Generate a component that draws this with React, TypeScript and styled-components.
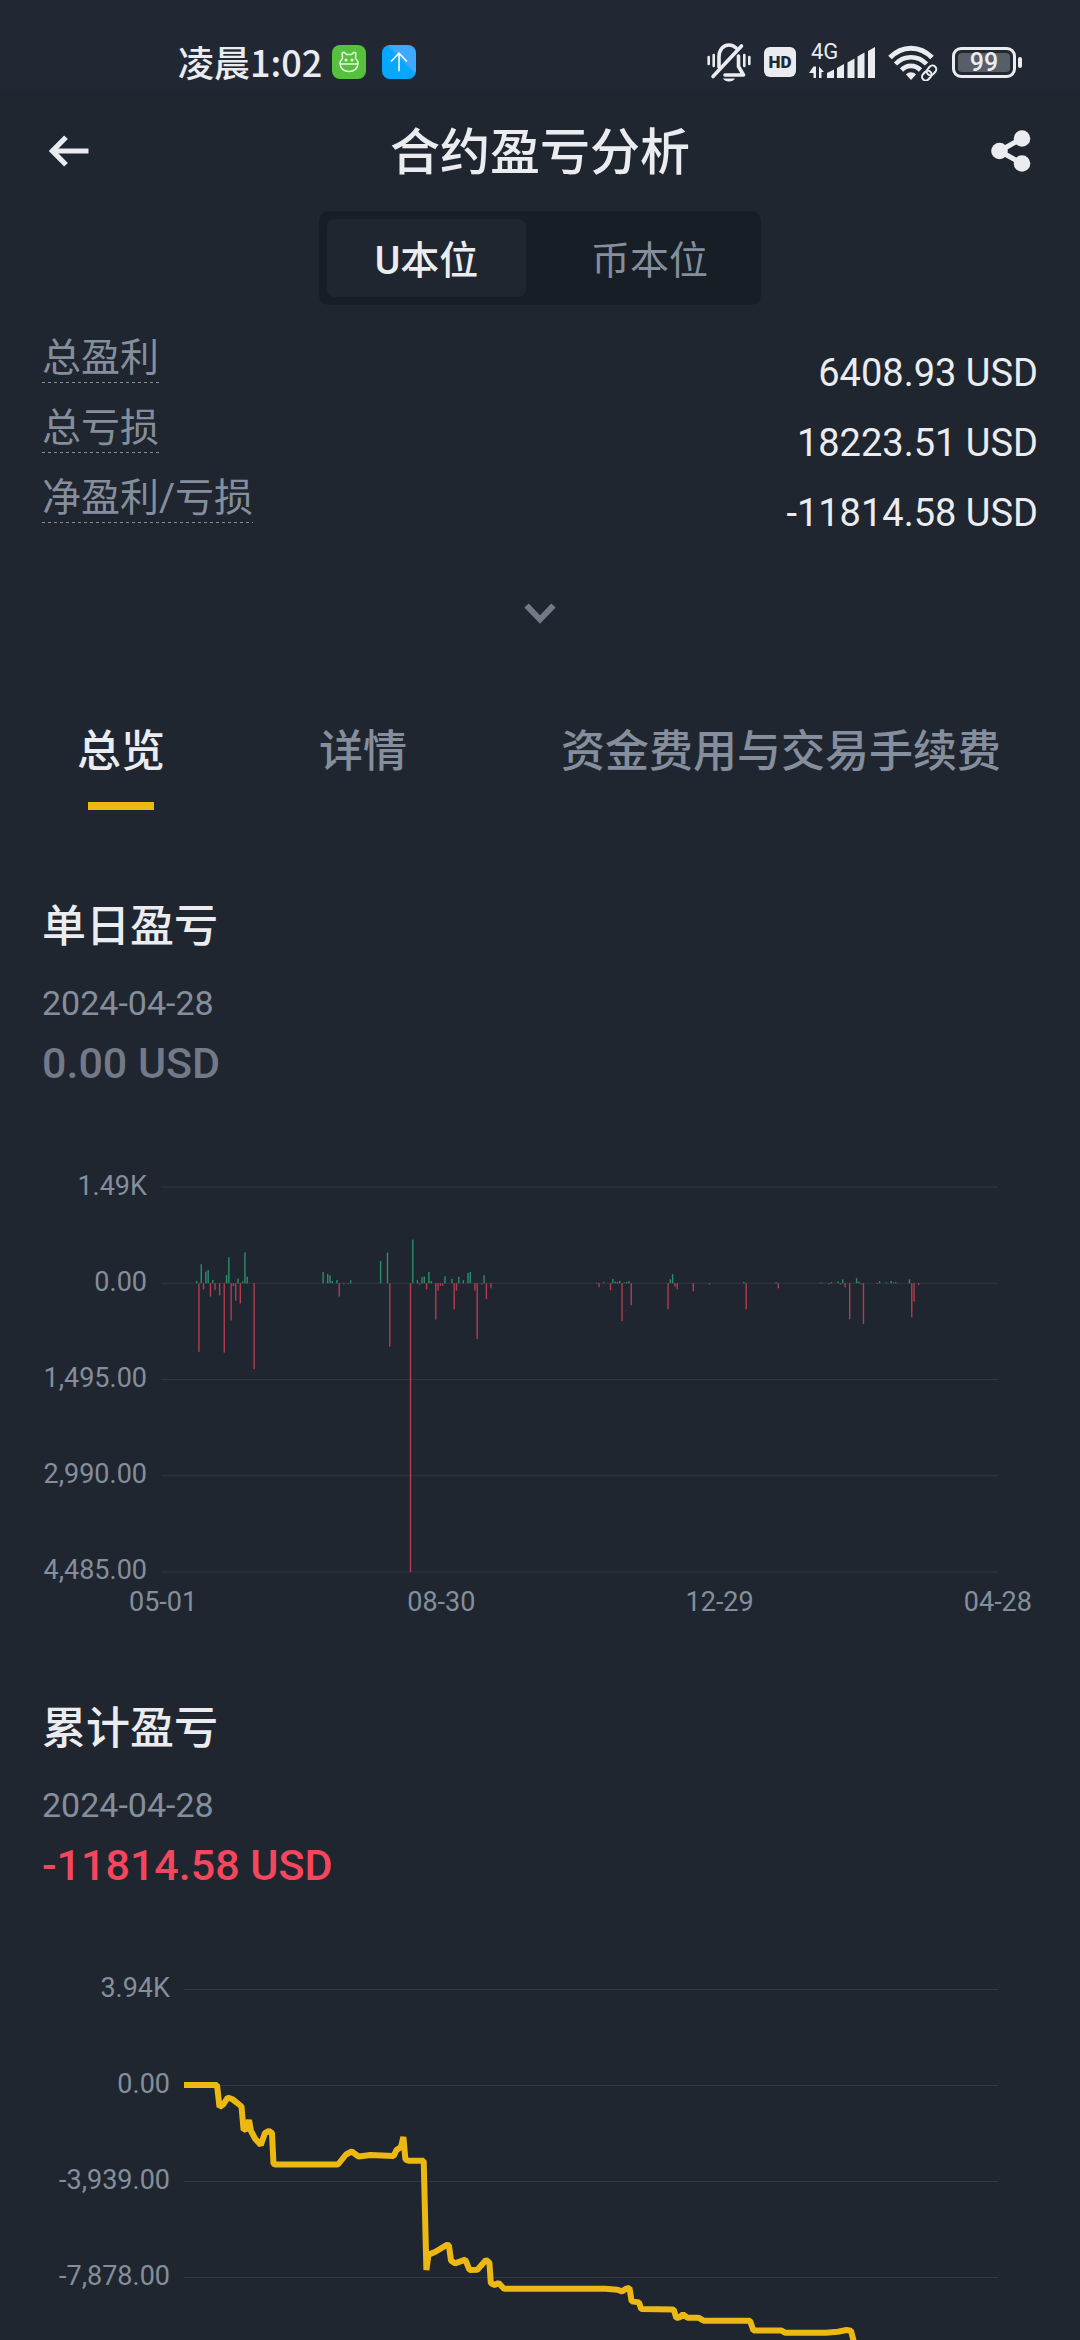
import React, { useState } from "react";
import styled, { createGlobalStyle } from "styled-components";

const color = {
  page: "#20262f",
  bar: "#212833",
  well: "#181e26",
  text: "#eaecef",
  muted: "#848e9c",
  faint: "#737987",
  line: "#313844",
  accent: "#ecb814",
  red: "#f6465d",
  green: "#2ebd85",
};

const GlobalStyle = createGlobalStyle`
  *, *::before, *::after { box-sizing: border-box; }
  body {
    margin: 0;
    background: ${color.page};
    color: ${color.text};
    font-family: Roboto, "Noto Sans CJK SC", sans-serif;
  }
  button {
    margin: 0;
    padding: 0;
    border: 0;
    background: none;
    color: inherit;
    font: inherit;
    cursor: pointer;
  }
`;

const Screen = styled.div`
  display: flex;
  flex-direction: column;
  height: 100vh;
  overflow: hidden;
`;

/* ---------- status bar ---------- */

const StatusBar = styled.div`
  display: flex;
  flex: none;
  align-items: center;
  justify-content: space-between;
  height: 89px;
  padding: 35px 58px 0 178px;
  background: ${color.bar};
`;

const StatusGroup = styled.div<{ $gap: number }>`
  display: flex;
  align-items: center;
  gap: ${(p) => p.$gap}px;
`;

const Clock = styled.span`
  margin-right: -6px;
  padding-bottom: 2px;
  font-family: "Noto Sans CJK SC", sans-serif;
  font-size: 36px;
  font-weight: 500;
  line-height: 40px;
`;

const AppBadge = styled.span<{ $fill: string }>`
  display: grid;
  place-items: center;
  width: 34px;
  height: 34px;
  border-radius: 8px;
  background: ${(p) => p.$fill};
`;

const HdBadge = styled.span`
  width: 32px;
  height: 30px;
  border-radius: 6px;
  background: ${color.text};
  color: ${color.bar};
  font-size: 17px;
  font-weight: 900;
  line-height: 30px;
  text-align: center;
`;

const Signal = styled.span`
  position: relative;
  display: block;
  width: 66px;
  height: 34px;
`;

const NetworkType = styled.span`
  position: absolute;
  top: -4px;
  left: 2px;
  font-size: 22px;
  line-height: 22px;
`;

const Battery = styled.span`
  display: flex;
  align-items: center;
  gap: 2px;
  &::after {
    content: "";
    width: 4px;
    height: 11px;
    border-radius: 2px;
    background: ${color.text};
  }
`;

const BatteryBody = styled.span`
  width: 64px;
  height: 31px;
  padding: 3px;
  border: 3px solid ${color.text};
  border-radius: 9px;
`;

const BatteryLevel = styled.span`
  display: block;
  height: 19px;
  border-radius: 4px;
  background: #585e68;
  font-size: 25px;
  font-weight: 500;
  line-height: 20px;
  text-align: center;
`;

/* ---------- header ---------- */

const Header = styled.header`
  display: grid;
  flex: none;
  grid-template-columns: 1fr auto 1fr;
  align-items: center;
  height: 122px;
  padding: 2px 49px 0;
`;

const Title = styled.h1`
  margin: 0;
  padding-top: 4px;
  font-size: 50px;
  font-weight: 500;
  line-height: 60px;
`;

const IconButton = styled.button<{ $end?: boolean }>`
  display: flex;
  justify-self: ${(p) => (p.$end ? "end" : "start")};
`;

const Segment = styled.div`
  display: flex;
  flex: none;
  align-self: center;
  gap: 24px;
  padding: 8px 12px 8px 8px;
  border-radius: 10px;
  background: ${color.well};
`;

const SegmentButton = styled.button<{ $active: boolean }>`
  width: 199px;
  height: 78px;
  padding-top: 6px;
  border-radius: 8px;
  background: ${(p) => (p.$active ? color.page : "transparent")};
  color: ${(p) => (p.$active ? color.text : color.muted)};
  font-size: 39px;
  font-weight: ${(p) => (p.$active ? 500 : 400)};
  line-height: 48px;
`;

/* ---------- summary ---------- */

const Content = styled.main`
  display: flex;
  flex: 1;
  flex-direction: column;
  min-height: 0;
  overflow: hidden;
`;

const Summary = styled.dl`
  display: flex;
  flex-direction: column;
  gap: 10px;
  margin: 30px 0 0;
  padding: 0 42px;
`;

const SummaryRow = styled.div`
  display: flex;
  justify-content: space-between;
  height: 60px;
`;

const SummaryLabel = styled.dt`
  align-self: flex-start;
  padding-bottom: 2px;
  background: repeating-linear-gradient(90deg, ${color.muted} 0 3px, transparent 3px 6px) left bottom / 100% 1px no-repeat;
  color: ${color.muted};
  font-size: 39px;
  line-height: 46px;
`;

const SummaryValue = styled.dd`
  align-self: flex-end;
  margin: 0;
  font-size: 38px;
  line-height: 44px;
`;

const ExpandButton = styled.button`
  display: flex;
  align-self: center;
  margin-top: 68px;
`;

/* ---------- tabs ---------- */

const Tabs = styled.nav`
  display: flex;
  flex: none;
  margin: 97px 0 6px;
`;

const Tab = styled.button<{ $active: boolean }>`
  display: flex;
  flex-direction: column;
  align-items: center;
  gap: 20px;
  padding: 0 77px;
  color: ${(p) => (p.$active ? color.text : color.muted)};
  font-size: 44px;
  font-weight: 500;
  line-height: 60px;
  white-space: nowrap;
  &::after {
    content: "";
    width: 66px;
    height: 8px;
    background: ${(p) => (p.$active ? color.accent : "transparent")};
  }
`;

/* ---------- chart sections ---------- */

const Section = styled.section`
  flex: none;
  padding: 81px 42px 0;
`;

const SectionTitle = styled.h2`
  margin: 0;
  font-size: 44px;
  font-weight: 500;
  line-height: 60px;
`;

const SectionDate = styled.time`
  display: block;
  margin-top: 22px;
  color: ${color.muted};
  font-size: 34px;
  line-height: 48px;
`;

const SectionValue = styled.p<{ $tone: string }>`
  margin: 6px 0 0;
  color: ${(p) => p.$tone};
  font-size: 43px;
  font-weight: 500;
  line-height: 60px;
`;

const ChartFrame = styled.figure<{ $axis: number }>`
  display: grid;
  grid-template-columns: ${(p) => p.$axis}px 1fr;
  column-gap: 14px;
  margin: 77px 40px 0 0;
`;

const YAxis = styled.div`
  display: flex;
  flex-direction: column;
  align-items: flex-end;
  gap: 64px;
`;

const Tick = styled.span`
  color: ${color.muted};
  font-size: 27px;
  line-height: 32px;
`;

const Plot = styled.svg`
  display: block;
  width: 100%;
  height: 385px;
  margin-top: 17px;
  overflow: visible;
`;

const XAxis = styled.div`
  display: flex;
  grid-column: 2;
  justify-content: space-between;
  margin: 0 -34px 0 -32px;
`;

/* Daily result: [day index, height], one grid row is 289 units. */
const ROW = 289;
const DAYS = 364;
const daily: [number, number][] = [
  [15, 7], [16, -206], [17, 57], [18, -18], [19, 35], [20, 40], [21, -40], [22, 10], [23, -20], [25, -36],
  [27, -208], [28, 25], [29, 78], [30, -112], [31, -8], [32, -52], [33, 14], [34, -61], [35, 6], [36, 93],
  [37, 20], [40, -258], [70, 34], [72, 28], [73, 24], [74, 7], [76, 10], [77, -40], [79, -3], [81, -2],
  [82, 9], [95, 67], [98, 92], [99, -190], [108, -867], [109, 131], [111, 9], [112, -4], [113, 18], [114, 20],
  [115, -18], [116, 34], [117, 7], [119, -109], [120, -22], [121, -8], [122, -7], [123, 21], [126, 13],
  [127, -78], [128, -22], [129, 19], [131, 9], [133, 31], [134, 34], [136, -22], [137, -167], [139, -4],
  [140, 24], [141, -47], [143, -15], [189, 2], [190, -12], [192, 3], [195, -21], [196, 13], [197, 5], [198, 4],
  [199, 7], [200, -114], [201, 2], [202, 4], [203, 6], [204, -66], [220, -78], [221, 12], [222, 27], [223, -10],
  [224, -18], [231, -24], [238, -4], [253, 4], [254, -78], [267, 3], [268, -15], [286, 2], [287, 2], [290, -3],
  [291, 3], [294, 5], [295, -4], [296, 12], [297, -12], [299, -108], [302, 15], [303, 5], [304, -3], [305, -122],
  [311, -2], [312, 6], [315, 2], [317, 7], [318, 2], [319, 3], [325, 12], [326, -102], [327, -55], [329, -5],
];

const cumulative =
  "0,96 33,96 35.5,118 39.6,115 43.7,108.6 48,110 52,113 57.5,117.5 59.6,141 62.7,140 65,131 67,142 71.3,150 76.8,156 81,144 85,142 88,144 89.5,174.6 91,175.5 154,175.5 162,165.5 167.7,162.5 174.6,167.5 186.6,166 209.7,167 212.5,161 217,158 219.4,148 221.4,170.5 224.5,171.7 239.7,171.7 242.4,281 244.5,265.6 251,263 263.4,255.5 265,257 267,271.5 271,274.4 281.3,270.6 285.5,281 293.4,280.7 302,271 305.4,273.6 306.8,294 310.6,296 314.7,294 320,299.7 421.4,299.7 433.5,300.7 438,302.4 442,299.7 445.5,299 447.6,312.4 455,313.4 457.2,320 489.6,320.4 492.4,329 495.5,328.4 499,325.4 503.4,328.7 514.4,328.7 519.6,331.7 566,331.7 569.5,341.4 597,341.4 601,343.7 641.8,343.7 653.9,342.7 662.5,341 667,341.7 669.4,351 676,380 814,384";

const GridLines = ({ width, height }: { width: number; height: number }) => (
  <g stroke={color.line} strokeWidth="1" shapeRendering="crispEdges">
    {[0, 1, 2, 3, 4].map((i) => (
      <line key={i} x1="0" x2={width} y1={(height * i) / 4} y2={(height * i) / 4} vectorEffect="non-scaling-stroke" />
    ))}
  </g>
);

const CatIcon = () => (
  <svg width="20" height="22" viewBox="0 0 20 22" fill="none" stroke="#e9f6e3" strokeWidth="1.5" strokeLinejoin="round">
    <path d="M3.5 7.5 3.2 2l2-.8L7.5 3.600h5L14.800 1.200l2 .8-.3 5.500C18.300 9 19 10.500 19 12.500c0 5-4 8-9 8s-9-3-9-8c0-2 .7-3.500 2.500-5Z" />
    <path d="M1.500 13h17" />
    <circle cx="7" cy="9" r="0.800" fill="#e9f6e3" />
    <circle cx="13" cy="9" r="0.800" fill="#e9f6e3" />
  </svg>
);

const UpArrowIcon = () => (
  <svg width="18" height="20" viewBox="0 0 18 20" fill="none" stroke="#f4fbff" strokeWidth="1.600" strokeLinecap="round">
    <path d="M9 1.200v17.600M1.500 9 9 1.200 16.500 9" />
  </svg>
);

const MutedBellIcon = () => (
  <svg width="44" height="39" viewBox="0 0 44 39" fill="none" stroke={color.text} strokeLinecap="round">
    <path d="M12 24V14C12 7 16 2 22 2c3 0 5.500 1.200 7.200 3.200" strokeWidth="3.600" />
    <path d="M34.500 3 6 33.500" strokeWidth="3.600" />
    <path d="M31.500 13v10.500l5 8.500H18" strokeWidth="3.600" strokeLinejoin="round" />
    <path d="M1.700 14v7M42.300 14v7" strokeWidth="2.600" />
    <path d="M6.700 12v11M37.300 12v11" strokeWidth="2.600" />
    <path d="M16 35.500h12c-2 4-10 4-12 0Z" fill={color.text} stroke="none" />
  </svg>
);

const SignalIcon = () => (
  <svg width="66" height="34" viewBox="0 0 66 34" fill={color.text}>
    <path d="M18 33v-5l7-3.500V33ZM28 33V23l7-4v14ZM38.500 33V17.500l7-4V33ZM48.500 33V11.500l7-4V33ZM59 33V6l7-4v31Z" />
    <path d="M4.500 21.500h2.500V33H4.500v-5H0ZM10 21.500 15 27h-2.500v.500V33H10Z" />
  </svg>
);

const WifiIcon = () => (
  <svg width="51" height="37" viewBox="0 0 51 37" fill="none" stroke={color.text}>
    <path d="M2 13.500C14 1 32 1 44 13.500" strokeWidth="5" />
    <path d="M7.500 20C16 11 30 11 38.500 20" strokeWidth="4.600" />
    <path d="M13.500 26C19 20.500 27 20.500 32.500 26" strokeWidth="4.600" />
    <path d="M18 30.500C20.500 27.500 25.500 27.500 28 30.500L23 36Z" fill={color.text} stroke="none" />
    <g strokeWidth="2" transform="rotate(-48 41.500 29)">
      <rect x="32.500" y="25" width="10.500" height="7.500" rx="3.700" />
      <rect x="39.500" y="25" width="10.500" height="7.500" rx="3.700" />
    </g>
  </svg>
);

const BackIcon = () => (
  <svg width="40" height="32" viewBox="0 0 40 32" fill="none" stroke={color.text} strokeWidth="5.200">
    <path d="M39.500 16H5" />
    <path d="M17 2.200 3.500 16 17 29.800" />
  </svg>
);

const ShareIcon = () => (
  <svg width="40" height="42" viewBox="0 0 40 42" fill={color.text}>
    <circle cx="8.500" cy="21" r="8.300" />
    <circle cx="31" cy="8.500" r="8.300" />
    <circle cx="31" cy="33.500" r="8.300" />
    <path d="M31 8.500 8.500 21 31 33.500" fill="none" stroke={color.text} strokeWidth="5" />
  </svg>
);

const ChevronIcon = () => (
  <svg width="32" height="22" viewBox="0 0 32 22" fill="none" stroke={color.faint} strokeWidth="6">
    <path d="m2.500 2.500 13.500 14 13.500-14" />
  </svg>
);

const summary = [
  { label: "总盈利", value: "6408.93 USD" },
  { label: "总亏损", value: "18223.51 USD" },
  { label: "净盈利/亏损", value: "-11814.58 USD" },
];

export default function App() {
  const [unit, setUnit] = useState("U本位");
  const [tab, setTab] = useState("总览");

  return (
    <Screen>
      <GlobalStyle />
      <StatusBar>
        <StatusGroup $gap={16}>
          <Clock>凌晨1:02</Clock>
          <AppBadge $fill="#55c13c"><CatIcon /></AppBadge>
          <AppBadge $fill="linear-gradient(45deg, #04a9ff 55%, #3fa9ff 60%)"><UpArrowIcon /></AppBadge>
        </StatusGroup>
        <StatusGroup $gap={13}>
          <MutedBellIcon />
          <HdBadge>HD</HdBadge>
          <Signal>
            <SignalIcon />
            <NetworkType>4G</NetworkType>
          </Signal>
          <WifiIcon />
          <Battery>
            <BatteryBody><BatteryLevel>99</BatteryLevel></BatteryBody>
          </Battery>
        </StatusGroup>
      </StatusBar>

      <Header>
        <IconButton aria-label="返回"><BackIcon /></IconButton>
        <Title>合约盈亏分析</Title>
        <IconButton $end aria-label="分享"><ShareIcon /></IconButton>
      </Header>

      <Segment>
        {["U本位", "币本位"].map((name) => (
          <SegmentButton key={name} $active={name === unit} onClick={() => setUnit(name)}>{name}</SegmentButton>
        ))}
      </Segment>

      <Content>
        <Summary>
          {summary.map((row) => (
            <SummaryRow key={row.label}>
              <SummaryLabel>{row.label}</SummaryLabel>
              <SummaryValue>{row.value}</SummaryValue>
            </SummaryRow>
          ))}
        </Summary>
        <ExpandButton aria-label="展开"><ChevronIcon /></ExpandButton>

        <Tabs>
          {["总览", "详情", "资金费用与交易手续费"].map((name) => (
            <Tab key={name} $active={name === tab} onClick={() => setTab(name)}>{name}</Tab>
          ))}
        </Tabs>

        <Section>
          <SectionTitle>单日盈亏</SectionTitle>
          <SectionDate>2024-04-28</SectionDate>
          <SectionValue $tone={color.faint}>0.00 USD</SectionValue>
          <ChartFrame $axis={105}>
            <YAxis>
              {["1.49K", "0.00", "1,495.00", "2,990.00", "4,485.00"].map((t) => <Tick key={t}>{t}</Tick>)}
            </YAxis>
            <Plot viewBox={`0 0 ${DAYS} ${ROW * 4}`} preserveAspectRatio="none">
              <GridLines width={DAYS} height={ROW * 4} />
              {daily.map(([day, v]) => (
                <rect
                  key={day}
                  x={day + 0.2}
                  width="0.6"
                  y={v > 0 ? ROW - v : ROW}
                  height={Math.abs(v)}
                  fill={v > 0 ? color.green : color.red}
                  opacity="0.7"
                />
              ))}
            </Plot>
            <XAxis>
              {["05-01", "08-30", "12-29", "04-28"].map((t) => <Tick key={t}>{t}</Tick>)}
            </XAxis>
          </ChartFrame>
        </Section>

        <Section>
          <SectionTitle>累计盈亏</SectionTitle>
          <SectionDate>2024-04-28</SectionDate>
          <SectionValue $tone={color.red}>-11814.58 USD</SectionValue>
          <ChartFrame $axis={128}>
            <YAxis>
              {["3.94K", "0.00", "-3,939.00", "-7,878.00"].map((t) => <Tick key={t}>{t}</Tick>)}
            </YAxis>
            <Plot viewBox="0 0 814 385" preserveAspectRatio="none">
              <GridLines width={814} height={385} />
              <polyline points={cumulative} fill="none" stroke={color.accent} strokeWidth="6" strokeLinejoin="bevel" />
            </Plot>
          </ChartFrame>
        </Section>
      </Content>
    </Screen>
  );
}
